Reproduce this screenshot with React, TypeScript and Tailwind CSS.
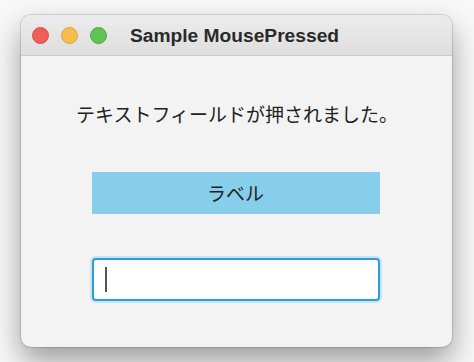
import React from "react";

export default function App() {
  return (
    <div className="w-[474px] h-[362px] bg-[#f8f8f8] overflow-hidden pt-[15px] pl-[21px]">
      <div className="w-[431px] h-[332px] rounded-[10px] bg-[#f3f3f3] shadow-[0_14px_30px_rgba(0,0,0,0.38),0_0_0_1px_rgba(0,0,0,0.12)] overflow-hidden flex flex-col">
        <div className="h-[41px] shrink-0 bg-gradient-to-b from-[#ececec] to-[#dedede] border-b border-[#c9c9c9] flex items-center">
          <div className="flex items-center gap-[12px] ml-[11px]">
            <div className="w-[17px] h-[17px] rounded-full bg-[#ee5f57] border border-[#dc4c44]" />
            <div className="w-[17px] h-[17px] rounded-full bg-[#f6bd4e] border border-[#dea33a]" />
            <div className="w-[17px] h-[17px] rounded-full bg-[#60c353] border border-[#4eaa40]" />
          </div>
          <div
            className="ml-[23px] mt-[1px] text-[19.2px] font-bold text-[#2a2a2a] leading-none"
            style={{ fontFamily: '"Liberation Sans", Arial, sans-serif' }}
          >
            Sample MousePressed
          </div>
        </div>
        <div
          className="flex flex-col items-center pt-[45px] pr-[2px]"
          style={{ fontFamily: '"Noto Sans CJK JP", "Noto Sans", sans-serif' }}
        >
          <div className="text-[19px] leading-[26px] text-[#222] pl-[3px]">テキストフィールドが押されました。</div>
          <div className="mt-[45px] w-[288px] h-[42px] bg-[#87ceeb] flex items-center justify-center text-[19px] text-[#222]">
            ラベル
          </div>
          <div className="mt-[44px] w-[288px] h-[43px] bg-white rounded-[4px] border-2 border-[#2a9fd9] shadow-[0_0_0_2px_rgba(120,200,240,0.35)] flex items-center pl-[11px]">
            <div className="w-[2px] h-[25px] bg-[#555]" />
          </div>
        </div>
      </div>
    </div>
  );
}
